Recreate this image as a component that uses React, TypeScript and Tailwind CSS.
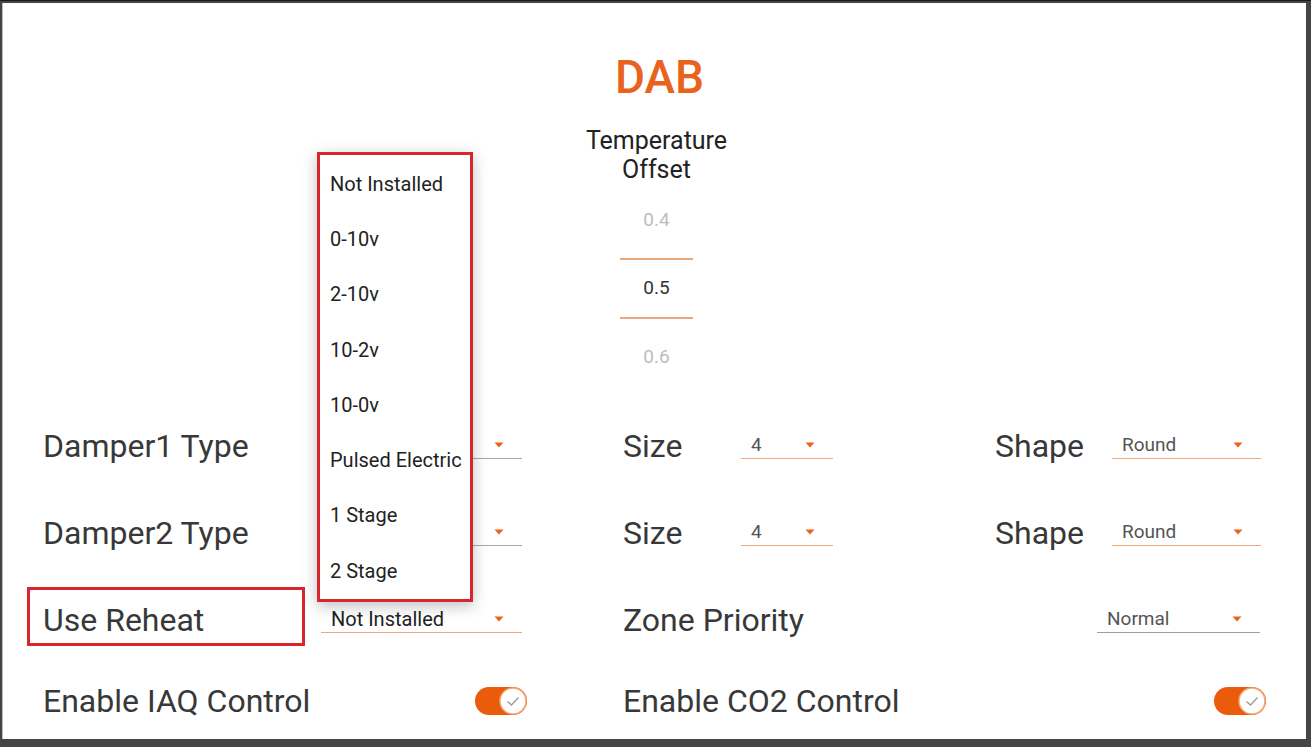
import React from "react";

const font = { fontFamily: "Roboto, 'Noto Sans', sans-serif" };

function Arrow() {
  return (
    <svg width="10" height="6" viewBox="0 0 10 6" className="shrink-0">
      <path d="M0.5 0.5 L9.5 0.5 L5 5.5 Z" fill="#e8641e" />
    </svg>
  );
}

function Select({
  value,
  width,
  line,
  textClass,
}: {
  value: string;
  width: string;
  line: string;
  textClass: string;
}) {
  return (
    <div className={`${width} h-[27px] flex items-center justify-between pl-[10px] pr-[18px] border-b-[1.5px] ${line}`}>
      <span className={textClass}>{value}</span>
      <Arrow />
    </div>
  );
}

function Toggle() {
  return (
    <svg width="56" height="32" viewBox="0 0 56 32" className="shrink-0">
      <rect x="1" y="2" width="52" height="28" rx="14" fill="#ea5b0c" />
      <circle cx="39" cy="16" r="13" fill="#ffffff" stroke="#f3a878" strokeWidth="1.5" />
      <path d="M33.5 16.5 L37.5 20 L44.5 12.5" fill="none" stroke="#9a9a9a" strokeWidth="1.3" />
    </svg>
  );
}

const label = "text-[32px] text-[#383838] leading-none whitespace-nowrap";
const smallVal = "text-[19px] text-[#555]";

export default function App() {
  const items = [
    "Not Installed",
    "0-10v",
    "2-10v",
    "10-2v",
    "10-0v",
    "Pulsed Electric",
    "1 Stage",
    "2 Stage",
  ];
  return (
    <div
      className="w-[1311px] h-[747px] bg-[#454545] pt-[2px] pl-[2px] pr-[5px] pb-[8px] border-t-[1px] border-[#1a1a1a]"
      style={font}
    >
      <div className="relative w-full h-full bg-white flex flex-col border-l-[1px] border-[#bdbdbd]">
        {/* header */}
        <div className="flex flex-col items-center pt-[51px]">
          <div className="ml-[10px] text-[46px] leading-none font-medium text-[#e8641e]">DAB</div>
          <div className="mt-[26px] ml-[4px] text-[25px] leading-[29px] text-[#222] text-center">
            Temperature
            <br />
            Offset
          </div>
          <div className="mt-[16px] ml-[4px] w-[73px] flex flex-col text-[19px]">
            <div className="h-[40px] flex items-center justify-center text-[#bdbdbd]">0.4</div>
            <div className="h-[18px]" />
            <div className="h-[2px] bg-[#eba580]" />
            <div className="h-[57px] flex items-center justify-center text-[#333]">0.5</div>
            <div className="h-[2px] bg-[#eba580]" />
            <div className="h-[18px]" />
            <div className="h-[40px] flex items-center justify-center text-[#bdbdbd]">0.6</div>
          </div>
        </div>

        {/* rows */}
        <div className="mt-[25px] flex flex-col">
          {[1, 2].map((n) => (
            <div key={n} className="h-[87px] flex items-center pl-[40px]">
              <div className="w-[580px] flex items-center">
                <div className={`${label} w-[278px]`}>Damper{n} Type</div>
                <Select value="" width="w-[201px]" line="border-[#a8a8a8]" textClass="text-[20px] text-[#222]" />
              </div>
              <div className="w-[372px] flex items-center">
                <div className={`${label} w-[118px]`}>Size</div>
                <Select value="4" width="w-[92px]" line="border-[#f0a77c]" textClass={smallVal} />
              </div>
              <div className="flex items-center">
                <div className={`${label} w-[117px]`}>Shape</div>
                <Select value="Round" width="w-[149px]" line="border-[#f0a77c]" textClass={smallVal} />
              </div>
            </div>
          ))}
          <div className="h-[87px] flex items-center pl-[40px]">
            <div className="w-[580px] flex items-center">
              <div className={`${label} w-[278px]`}>Use Reheat</div>
              <Select value="Not Installed" width="w-[201px]" line="border-[#f0a77c]" textClass="text-[20px] text-[#222]" />
            </div>
            <div className="w-[637px] flex items-center justify-between">
              <div className={label}>Zone Priority</div>
              <Select value="Normal" width="w-[163px]" line="border-[#9e9e9e]" textClass="text-[19px] text-[#555]" />
            </div>
          </div>
          <div className="h-[75px] flex items-center pl-[40px]">
            <div className="w-[580px] flex items-center">
              <div className={`${label} w-[431px]`}>Enable IAQ Control</div>
              <Toggle />
            </div>
            <div className="flex items-center">
              <div className={`${label} w-[590px]`}>Enable CO2 Control</div>
              <Toggle />
            </div>
          </div>
        </div>

        {/* open dropdown menu */}
        <div className="absolute left-[314px] top-[149px] w-[156px] h-[450px] bg-white border-[3px] border-[#d9252c] shadow-[0_4px_14px_rgba(0,0,0,0.25)] pt-[1px] flex flex-col">
          {items.map((t) => (
            <div key={t} className="h-[55.3px] flex items-center pl-[10px] text-[20px] text-[#222] whitespace-nowrap">
              {t}
            </div>
          ))}
        </div>

        {/* highlight box on Use Reheat */}
        <div className="absolute left-[24px] top-[584px] w-[278px] h-[59px] border-[3px] border-[#d9252c]" />
      </div>
    </div>
  );
}
